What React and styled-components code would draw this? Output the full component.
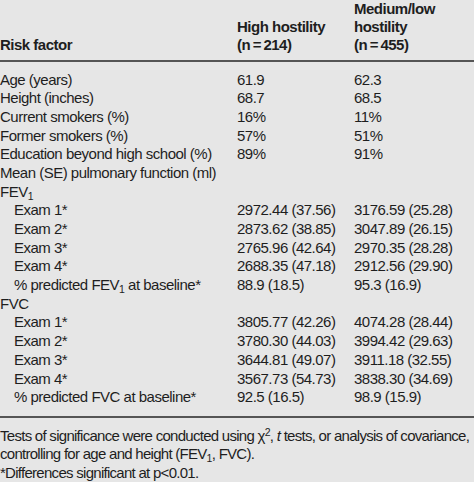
import React from "react";
import styled, { createGlobalStyle } from "styled-components";

const Global = createGlobalStyle`
  html, body { margin: 0; padding: 0; background: #e6e6e6; }
  body { font-family: "Liberation Sans", Arial, sans-serif; color: #1e1e1e; }
`;

const Page = styled.div`
  width: 474px;
  height: 482px;
  background: #e6e6e6;
  overflow: hidden;
  font-size: 15px;
  letter-spacing: -0.5px;
`;

const Grid = styled.div`
  display: grid;
  grid-template-columns: 237px 117px 1fr;
`;

const Head = styled(Grid)`
  align-items: end;
  font-weight: bold;
  line-height: 18px;
  padding-bottom: 6px;
  border-bottom: 2px solid #555;
`;

const Body = styled.div`
  padding: 8.5px 0 9px;
  border-bottom: 2px solid #555;
`;

const Row = styled(Grid)`
  height: 18.7px;
  line-height: 18.7px;
  white-space: nowrap;
`;

const Label = styled.div`
  padding-left: ${(p) => (p.$indent ? "14px" : "0")};
`;

const Footer = styled.div`
  padding-top: 9px;
  line-height: 18.5px;
  font-size: 15px;
  letter-spacing: -0.72px;
  white-space: nowrap;
`;

const Sub = styled.sub`
  font-size: 0.7em;
  line-height: 0;
  vertical-align: -0.25em;
`;

const Sup = styled.sup`
  font-size: 0.7em;
  line-height: 0;
  vertical-align: 0.5em;
`;

const rows = [
  ["Age (years)", "61.9", "62.3"],
  ["Height (inches)", "68.7", "68.5"],
  ["Current smokers (%)", "16%", "11%"],
  ["Former smokers (%)", "57%", "51%"],
  ["Education beyond high school (%)", "89%", "91%"],
  ["Mean (SE) pulmonary function (ml)", "", ""],
  [<>FEV<Sub>1</Sub></>, "", ""],
  ["Exam 1*", "2972.44 (37.56)", "3176.59 (25.28)", true],
  ["Exam 2*", "2873.62 (38.85)", "3047.89 (26.15)", true],
  ["Exam 3*", "2765.96 (42.64)", "2970.35 (28.28)", true],
  ["Exam 4*", "2688.35 (47.18)", "2912.56 (29.90)", true],
  [<>% predicted FEV<Sub>1</Sub> at baseline*</>, "88.9 (18.5)", "95.3 (16.9)", true],
  ["FVC", "", ""],
  ["Exam 1*", "3805.77 (42.26)", "4074.28 (28.44)", true],
  ["Exam 2*", "3780.30 (44.03)", "3994.42 (29.63)", true],
  ["Exam 3*", "3644.81 (49.07)", "3911.18 (32.55)", true],
  ["Exam 4*", "3567.73 (54.73)", "3838.30 (34.69)", true],
  ["% predicted FVC at baseline*", "92.5 (16.5)", "98.9 (15.9)", true],
];

export default function App() {
  return (
    <Page>
      <Global />
      <Head>
        <div>Risk factor</div>
        <div>High hostility<br />(n{"\u2009=\u2009"}214)</div>
        <div>Medium/low<br />hostility<br />(n{"\u2009=\u2009"}455)</div>
      </Head>
      <Body>
        {rows.map((r, i) => (
          <Row key={i}>
            <Label $indent={r[3]}>{r[0]}</Label>
            <div>{r[1]}</div>
            <div>{r[2]}</div>
          </Row>
        ))}
      </Body>
      <Footer>
        Tests of significance were conducted using χ<Sup>2</Sup>, <i>t</i> tests, or analysis of covariance,
        <br />controlling for age and height (FEV<Sub>1</Sub>, FVC).
        <br />*Differences significant at p&lt;0.01.
      </Footer>
    </Page>
  );
}
